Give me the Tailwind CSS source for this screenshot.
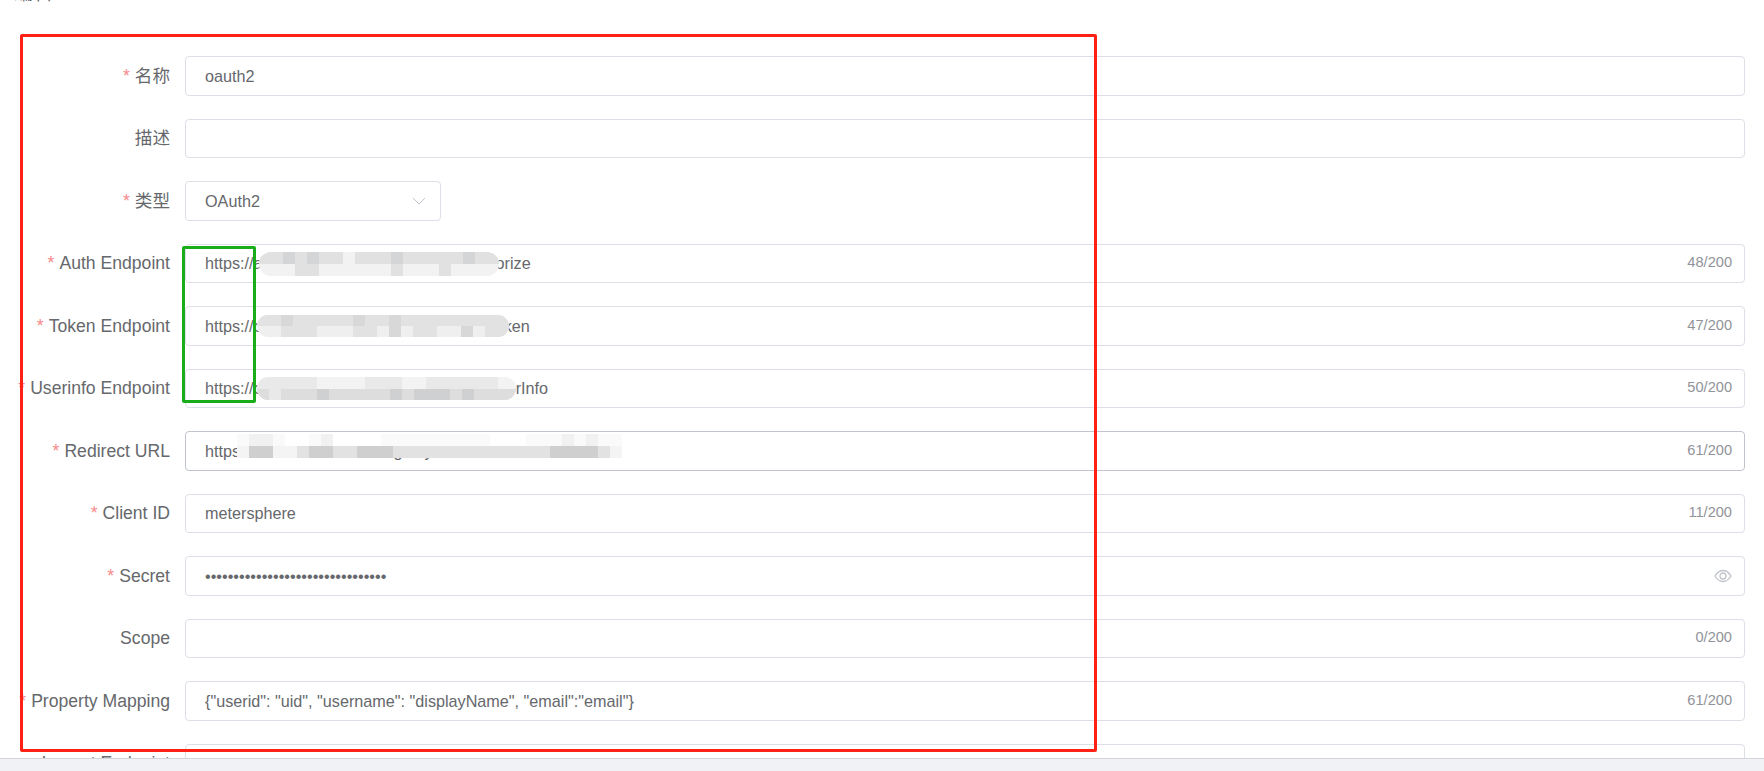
<!DOCTYPE html>
<html lang="en">
<head>
  <meta charset="UTF-8">
  <title>OAuth2</title>
  <script src="https://cdn.jsdelivr.net/npm/@tailwindcss/browser@4"></script>
</head>
<body class="bg-white h-screen overflow-hidden relative font-['Liberation_Sans','Noto_Sans_CJK_SC',sans-serif] text-[16.2px] text-[#66686c]">
  <div class="h-[56px] overflow-hidden">
    <p class="-mt-[20px] ml-[14px] text-[#606266] text-[19px]">编辑</p>
  </div>

  <form class="flex flex-col gap-[23px]">
    <div class="flex items-center">
      <label class="w-[170px] text-right text-[17.6px]"><span class="text-[#f78989] mr-[5px]">*</span>名称</label>
      <div class="ml-[15px] w-[1560px] h-[39.5px] px-[19px] flex items-center border border-[#dcdfe6] rounded-[4px]">oauth2</div>
    </div>
    <div class="flex items-center">
      <label class="w-[170px] text-right text-[17.6px]">描述</label>
      <div class="ml-[15px] w-[1560px] h-[39.5px] px-[19px] flex items-center border border-[#dcdfe6] rounded-[4px]"></div>
    </div>
    <div class="flex items-center">
      <label class="w-[170px] text-right text-[17.6px]"><span class="text-[#f78989] mr-[5px]">*</span>类型</label>
      <div class="ml-[15px] w-[256px] h-[39.5px] pl-[19px] pr-[14px] flex items-center justify-between border border-[#dcdfe6] rounded-[4px]">
        OAuth2
        <svg width="14" height="14" viewBox="0 0 14 14" fill="none" stroke="#c0c4cc" stroke-width="1"><path d="M1 4l6 6 6-6"/></svg>
      </div>
    </div>
    <div class="flex items-center">
      <label class="w-[170px] text-right text-[17.6px]"><span class="text-[#f78989] mr-[5px]">*</span>Auth Endpoint</label>
      <div class="ml-[15px] w-[1560px] h-[39.5px] px-[19px] flex items-center justify-between border border-[#dcdfe6] rounded-[4px]">
        <span>https://a<span class="inline-block w-[233px]"></span>orize</span><span class="text-[14.6px] text-[#909399] -mr-[7px]">48/200</span>
      </div>
    </div>
    <div class="flex items-center">
      <label class="w-[170px] text-right text-[17.6px]"><span class="text-[#f78989] mr-[5px]">*</span>Token Endpoint</label>
      <div class="ml-[15px] w-[1560px] h-[39.5px] px-[19px] flex items-center justify-between border border-[#dcdfe6] rounded-[4px]">
        <span>https://c<span class="inline-block w-[242px]"></span>ken</span><span class="text-[14.6px] text-[#909399] -mr-[7px]">47/200</span>
      </div>
    </div>
    <div class="flex items-center">
      <label class="w-[170px] text-right text-[17.6px]"><span class="text-[#f78989] mr-[5px]">*</span>Userinfo Endpoint</label>
      <div class="ml-[15px] w-[1560px] h-[39.5px] px-[19px] flex items-center justify-between border border-[#dcdfe6] rounded-[4px]">
        <span>https://c<span class="inline-block w-[245px]"></span>erInfo</span><span class="text-[14.6px] text-[#909399] -mr-[7px]">50/200</span>
      </div>
    </div>
    <div class="flex items-center">
      <label class="w-[170px] text-right text-[17.6px]"><span class="text-[#f78989] mr-[5px]">*</span>Redirect URL</label>
      <div class="ml-[15px] w-[1560px] h-[39.5px] px-[19px] flex items-center justify-between border border-[#c0c4cc] rounded-[4px]">
        <span>https://<span class="inline-block w-[140px]"></span>g<span class="inline-block w-[22px]"></span>y</span><span class="text-[14.6px] text-[#909399] -mr-[7px]">61/200</span>
      </div>
    </div>
    <div class="flex items-center">
      <label class="w-[170px] text-right text-[17.6px]"><span class="text-[#f78989] mr-[5px]">*</span>Client ID</label>
      <div class="ml-[15px] w-[1560px] h-[39.5px] px-[19px] flex items-center justify-between border border-[#dcdfe6] rounded-[4px]">
        <span>metersphere</span><span class="text-[14.6px] text-[#909399] -mr-[7px]">11/200</span>
      </div>
    </div>
    <div class="flex items-center">
      <label class="w-[170px] text-right text-[17.6px]"><span class="text-[#f78989] mr-[5px]">*</span>Secret</label>
      <div class="ml-[15px] w-[1560px] h-[39.5px] px-[19px] flex items-center justify-between border border-[#dcdfe6] rounded-[4px]">
        <span>••••••••••••••••••••••••••••••••</span>
        <svg class="-mr-[7px]" width="18" height="14" viewBox="0 0 18 14" fill="none" stroke="#c0c4cc" stroke-width="1.3"><path d="M1 7c2-3.400 4.800-5.500 8-5.500s6 2.100 8 5.500c-2 3.400-4.800 5.500-8 5.500s-6-2.100-8-5.500z"/><circle cx="9" cy="7" r="3"/></svg>
      </div>
    </div>
    <div class="flex items-center">
      <label class="w-[170px] text-right text-[17.6px]">Scope</label>
      <div class="ml-[15px] w-[1560px] h-[39.5px] px-[19px] flex items-center justify-end border border-[#dcdfe6] rounded-[4px]">
        <span class="text-[14.6px] text-[#909399] -mr-[7px]">0/200</span>
      </div>
    </div>
    <div class="flex items-center">
      <label class="w-[170px] text-right text-[17.6px]"><span class="text-[#f78989] mr-[5px]">*</span>Property Mapping</label>
      <div class="ml-[15px] w-[1560px] h-[39.5px] px-[19px] flex items-center justify-between border border-[#dcdfe6] rounded-[4px]">
        <span>{"userid": "uid", "username": "displayName", "email":"email"}</span><span class="text-[14.6px] text-[#909399] -mr-[7px]">61/200</span>
      </div>
    </div>
    <div class="flex items-center">
      <label class="w-[170px] text-right text-[17.6px]">Logout Endpoint</label>
      <div class="ml-[15px] w-[1560px] h-[39.5px] border border-[#dcdfe6] rounded-[4px]"></div>
    </div>
  </form>

  <!-- mosaic over the hidden parts of the urls -->
  <svg class="absolute left-[259px] top-[252px] rounded-[12px]" width="240" height="24" viewBox="0 0 20 2" preserveAspectRatio="none" shape-rendering="crispEdges">
    <rect width="20" height="2" fill="#f2f2f2"/>
    <path fill="#e1e1e1" d="M0 0h2v1h-2zM3 0h1v1h-1zM5 0h2v1h-2zM8 0h3v1h-3zM12 0h5v1h-5zM18 0h2v1h-2zM3 1h2v1h-2zM11 1h1v1h-1zM15 1h1v1h-1z"/>
    <path fill="#d4d5d6" d="M2 0h1v1h-1zM4 0h1v1h-1zM11 0h1v1h-1zM17 0h1v1h-1z"/>
  </svg>
  <svg class="absolute left-[257px] top-[315px] rounded-[12px]" width="252" height="22" viewBox="0 0 21 2" preserveAspectRatio="none" shape-rendering="crispEdges">
    <rect width="21" height="2" fill="#efefef"/>
    <path fill="#e2e2e2" d="M0 0h2v1h-2zM3 0h5v1h-5zM9 0h2v1h-2zM12 0h9v1h-9zM2 1h3v1h-3zM8 1h2v1h-2zM13 1h2v1h-2zM19 1h2v1h-2z"/>
    <path fill="#d8d8d9" d="M2 0h1v1h-1zM8 0h1v1h-1zM11 0h1v1h-1zM11 1h1v1h-1zM17 1h1v1h-1z"/>
  </svg>
  <svg class="absolute left-[257px] top-[377px] rounded-[12px]" width="259" height="23" viewBox="0 0 21.500 2" preserveAspectRatio="none" shape-rendering="crispEdges">
    <rect width="22" height="2" fill="#f3f3f3"/>
    <path fill="#e9e9e9" d="M0 0h5v1h-5zM9 0h3v1h-3zM14 0h6v1h-6zM1 1h1v1h-1z"/>
    <path fill="#dddddd" d="M0 1h1v1h-1zM2 1h3v1h-3zM6 1h2v1h-2zM8 1h3v1h-3zM12 1h1v1h-1zM16 1h6v1h-6z"/>
    <path fill="#cfd0d1" d="M5 1h1v1h-1zM11 1h1v1h-1zM13 1h3v1h-3zM17 1h1v1h-1z"/>
  </svg>
  <svg class="absolute left-[237px] top-[434px]" width="385" height="24" viewBox="0 0 32 2" preserveAspectRatio="none" shape-rendering="crispEdges">
    <rect width="32" height="1" fill="#fafafa"/>
    <rect y="1" width="32" height="1" fill="#e2e2e2"/>
    <path fill="#ffffff" d="M4 0h2v1h-2zM8 0h4v1h-4zM21 0h3v1h-3z"/>
    <path fill="#f1f1f1" d="M1 0h2v1h-2zM7 0h1v1h-1zM27 0h1v1h-1zM29 0h1v1h-1z"/>
    <path fill="#f4f4f4" d="M0 1h1v1h-1zM3 1h2v1h-2zM31 1h1v1h-1z"/>
    <path fill="#cfcfd0" d="M1 1h2v1h-2zM6 1h2v1h-2zM10 1h3v1h-3zM26 1h4v1h-4z"/>
  </svg>

  <!-- screenshot annotations -->
  <div class="absolute left-[20px] top-[34px] w-[1077px] h-[718px] border-[3px] border-[#ff2115] rounded-[2px]"></div>
  <div class="absolute left-[182px] top-[246px] w-[74px] h-[157px] border-[3px] border-[#19ad19] rounded-[2px]"></div>

  <footer class="absolute left-0 right-0 bottom-0 h-[13px] overflow-hidden bg-[#f0f2f5] border-t border-[#d3d5da] pl-[38px] pt-[9px] text-[17px] text-[#606266]">
    <span>Default login page uses the OAuth2 provider settings</span>
  </footer>
</body>
</html>
